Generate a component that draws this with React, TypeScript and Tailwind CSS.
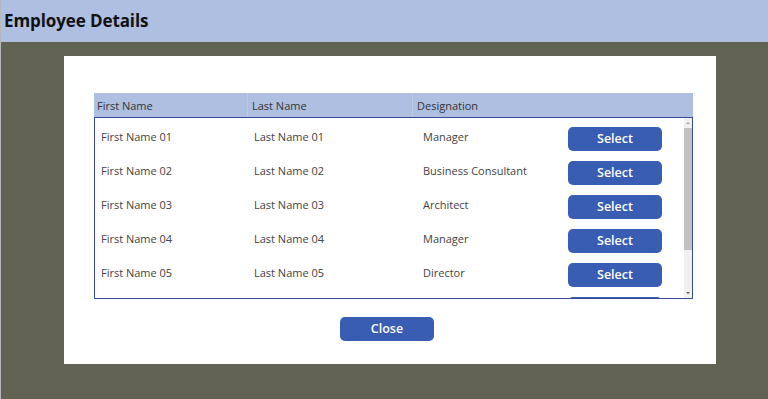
import React from 'react';

const employees = [
  { first: 'First Name 01', last: 'Last Name 01', role: 'Manager' },
  { first: 'First Name 02', last: 'Last Name 02', role: 'Business Consultant' },
  { first: 'First Name 03', last: 'Last Name 03', role: 'Architect' },
  { first: 'First Name 04', last: 'Last Name 04', role: 'Manager' },
  { first: 'First Name 05', last: 'Last Name 05', role: 'Director' },
  // only the button of the sixth row peeks into view
  { first: '', last: '', role: '' },
];

export default function App() {
  return (
    <div
      className="w-[768px] h-[399px] flex flex-col overflow-hidden bg-[#626252] border-l border-[#b8b8b8]"
      style={{ fontFamily: '"Open Sans", "Noto Sans", sans-serif' }}
    >
      {/* Title bar */}
      <div className="h-[42px] shrink-0 bg-[#aebfe1] flex items-center pl-[3px]">
        <h1 className="text-[17px] font-bold text-[#111] tracking-[-0.1px]">Employee Details</h1>
      </div>

      {/* Dialog */}
      <div className="pt-[14px] pl-[63px]">
        <div className="w-[652px] h-[308px] bg-white pt-[37px] pl-[30px]">
          {/* Header */}
          <div className="w-[599px] h-[24px] bg-[#aebfe1] flex text-[11px] text-[#333]">
            <div className="w-[154px] pl-[3px] pt-[2px] flex items-center border-r border-[#bccae6]">First Name</div>
            <div className="w-[165px] pl-[4px] pt-[2px] flex items-center border-r border-[#bccae6]">Last Name</div>
            <div className="flex-1 pl-[4px] pt-[2px] flex items-center">Designation</div>
          </div>

          {/* List */}
          <div className="w-[599px] h-[182px] border border-[#3b4a98] flex">
            <div className="flex-1 overflow-hidden pt-[2px] pl-[6px]">
              {employees.map((e, i) => (
                <div key={i} className="h-[34px] shrink-0 flex items-start text-[11px] text-[#444]">
                  <div className="w-[153px] pt-[9px] leading-[16px]">{e.first}</div>
                  <div className="w-[169px] pt-[9px] leading-[16px]">{e.last}</div>
                  <div className="w-[145px] pt-[9px] leading-[16px]">{e.role}</div>
                  <button className="mt-[7px] w-[94px] h-[24px] rounded-[5px] bg-[#3a5db4] text-white text-[12.5px] font-semibold flex items-center justify-center pt-[1px]">
                    {i < 5 ? 'Select' : ''}
                  </button>
                </div>
              ))}
            </div>
            {/* Scrollbar */}
            <div className="w-[8px] bg-[#f0f0f0] flex flex-col items-center">
              <svg width="8" height="10" viewBox="0 0 8 10" className="shrink-0">
                <path d="M2 6 L4 4 L6 6 Z" fill="#a0a0a0" />
              </svg>
              <div className="w-[8px] h-[122px] bg-[#c1c1c1]" />
              <div className="flex-1" />
              <svg width="8" height="10" viewBox="0 0 8 10" className="shrink-0">
                <path d="M2 4 L4 6 L6 4 Z" fill="#606060" />
              </svg>
            </div>
          </div>

          {/* Footer */}
          <div className="pt-[18px] pl-[246px]">
            <button className="w-[94px] h-[24px] rounded-[5px] bg-[#3a5db4] text-white text-[12.5px] font-semibold flex items-center justify-center pt-[1px]">
              Close
            </button>
          </div>
        </div>
      </div>
    </div>
  );
}
